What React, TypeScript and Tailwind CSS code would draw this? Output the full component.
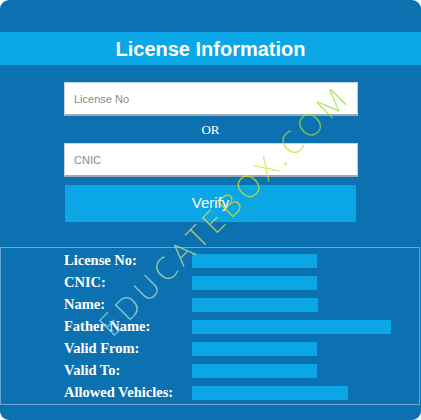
import React from "react";

const rows = [
  { label: "License No:", width: "w-[125px]" },
  { label: "CNIC:", width: "w-[125px]" },
  { label: "Name:", width: "w-[126px]" },
  { label: "Father Name:", width: "w-[199px]" },
  { label: "Valid From:", width: "w-[125px]" },
  { label: "Valid To:", width: "w-[125px]" },
  { label: "Allowed Vehicles:", width: "w-[156px]" },
];

export default function App() {
  return (
    <div className="w-[421px] h-[420px] bg-white">
      <div className="relative flex h-full flex-col overflow-hidden rounded-[9px] bg-[#0b71b0] pt-[32px]">
        {/* title band */}
        <div className="flex h-[33px] items-center justify-center bg-[#0aa6e6]">
          <h1 className="font-['Liberation_Sans',Arial,sans-serif] text-[20px] font-bold text-white">
            License Information
          </h1>
        </div>

        {/* search form */}
        <form className="flex flex-col px-[64px] pt-[17px]">
          <input
            type="text"
            placeholder="License No"
            className="h-[34px] w-[294px] border border-[#c9d3dc] border-b-2 border-b-[#9aa9b6] bg-white px-[9px] font-['Liberation_Sans',Tahoma,sans-serif] text-[11px] text-gray-700 outline-none placeholder:text-[#8a8a8a]"
          />
          <div className="flex h-[27px] items-center justify-center font-['Liberation_Serif',serif] text-[13px] text-white">
            OR
          </div>
          <input
            type="text"
            placeholder="CNIC"
            className="h-[34px] w-[294px] border border-[#c9d3dc] border-b-2 border-b-[#9aa9b6] bg-white px-[9px] font-['Liberation_Sans',Tahoma,sans-serif] text-[11px] text-gray-700 outline-none placeholder:text-[#8a8a8a]"
          />
          <button
            type="button"
            className="mt-[8px] ml-[1px] h-[37px] w-[291px] bg-[#0aa6e6] font-['Liberation_Sans',Arial,sans-serif] text-[15px] text-white"
          >
            Verify
          </button>
        </form>

        {/* result table */}
        <div className="mt-[25px] mr-[1px] border border-[#6aa4d0] pt-[2px]">
          {rows.map((row) => (
            <div key={row.label} className="flex h-[22px] items-center">
              <span className="w-[128px] shrink-0 pl-[63px] box-content font-['Liberation_Serif',serif] text-[14.5px] font-bold whitespace-nowrap text-white">
                {row.label}
              </span>
              <span className={`h-[14px] ${row.width} bg-[#0aa6e6]`} />
            </div>
          ))}
        </div>

        {/* watermark */}
        <div className="pointer-events-none absolute left-[224px] top-[210px] -translate-x-1/2 -translate-y-1/2 -rotate-45 whitespace-nowrap bg-linear-to-r from-[#9fe3f3] via-[#f2e400] to-[#8fd83a] bg-clip-text font-['Open_Sans',sans-serif] text-[31px] font-light tracking-[5px] text-transparent opacity-70">
          EDUCATEBOX.COM
        </div>
      </div>
    </div>
  );
}
